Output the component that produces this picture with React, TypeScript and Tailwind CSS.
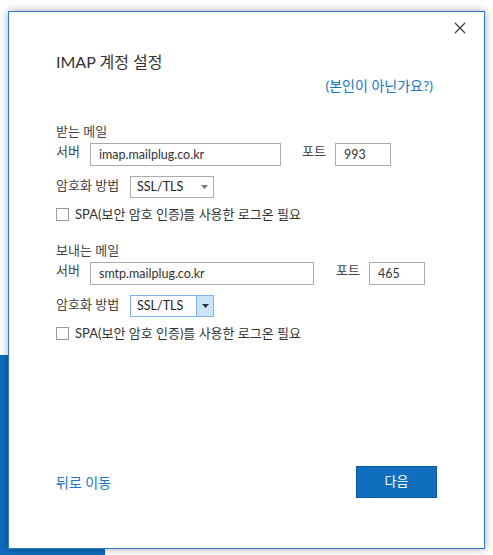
import React from "react";

const font = "font-['Lato','Noto_Sans_CJK_KR',sans-serif]";

function TextBox({ value, width }: { value: string; width: string }) {
  return (
    <div
      className={`${width} h-[23px] border border-[#ababab] bg-white pl-[8px] text-[12.5px] leading-[21px] text-[#333]`}
    >
      {value}
    </div>
  );
}

function Select({ active }: { active?: boolean }) {
  return (
    <div
      className={`flex w-[84px] h-[22px] border ${
        active ? "border-[#7eb4ea]" : "border-[#adadad]"
      } bg-white`}
    >
      <div className="flex-1 pl-[6px] text-[12.5px] leading-[20px] text-[#222]">SSL/TLS</div>
      <div
        className={`flex w-[17px] items-center justify-center ${
          active ? "bg-[#cce4f7] border-l border-[#7eb4ea]" : ""
        }`}
      >
        <svg width="7" height="4" viewBox="0 0 7 4">
          <path d="M0 0 L7 0 L3.5 4 Z" fill={active ? "#333" : "#777"} />
        </svg>
      </div>
    </div>
  );
}

function Checkbox({ label }: { label: string }) {
  return (
    <div className="flex items-center gap-[6px]">
      <div className="w-[13px] h-[13px] border border-[#999] bg-white" />
      <span className="text-[13px] leading-[18px] text-[#333]">{label}</span>
    </div>
  );
}

function Section({
  title,
  server,
  serverWidth,
  portGap,
  port,
  active,
}: {
  title: string;
  server: string;
  serverWidth: string;
  portGap: string;
  port: string;
  active?: boolean;
}) {
  return (
    <div className="flex flex-col">
      <div className="text-[13px] leading-[18px] text-[#444]">{title}</div>
      <div className="flex items-start mt-[3px]">
        <div className="w-[34px] text-[13px] leading-[17px] text-[#444]">서버</div>
        <TextBox value={server} width={serverWidth} />
        <div className={`${portGap} w-[33px] text-[13px] leading-[17px] text-[#444]`}>포트</div>
        <TextBox value={port} width="w-[56px]" />
      </div>
      <div className="flex items-start mt-[10px]">
        <div className="w-[74px] text-[13px] leading-[18px] text-[#444]">암호화 방법</div>
        <Select active={active} />
      </div>
      <div className="mt-[7px]">
        <Checkbox label="SPA(보안 암호 인증)를 사용한 로그온 필요" />
      </div>
    </div>
  );
}

export default function App() {
  return (
    <div className={`relative w-[493px] h-[555px] bg-white overflow-hidden ${font}`}>
      <div className="absolute left-0 top-[355px] w-[105px] h-[200px] bg-[#0f6cbd]" />
      <div className="relative ml-[8px] mt-[11px] w-[477px] h-[538px] border border-[#2b79c7] bg-white shadow-[0_0_8px_rgba(0,0,0,0.35)] flex flex-col">
        <div className="flex justify-end pt-[10px] pr-[18px]">
          <svg width="12" height="12" viewBox="0 0 12 12">
            <path d="M1 1 L11 11 M11 1 L1 11" stroke="#333" strokeWidth="1.1" />
          </svg>
        </div>
        <div className="pl-[47px] pr-[51px]">
          <div className="mt-[17px] text-[16px] leading-[22px] text-[#333]">IMAP 계정 설정</div>
          <div className="mt-[4px] text-right text-[14px] leading-[18px] text-[#1a75c8]">(본인이 아닌가요?)</div>
          <div className="mt-[27px]">
            <Section
              title="받는 메일"
              server="imap.mailplug.co.kr"
              serverWidth="w-[191px]"
              portGap="ml-[21px]"
              port="993"
            />
          </div>
          <div className="mt-[18px]">
            <Section
              title="보내는 메일"
              server="smtp.mailplug.co.kr"
              serverWidth="w-[224px]"
              portGap="ml-[22px]"
              port="465"
              active
            />
          </div>
        </div>
        <div className="flex-1" />
        <div className="flex items-center justify-between pl-[47px] pr-[47px] mb-[50px]">
          <span className="text-[14px] text-[#1a75c8]">뒤로 이동</span>
          <button className="w-[81px] h-[32px] bg-[#106ebe] border border-[#0b5aa3] text-[13px] text-white">
            다음
          </button>
        </div>
      </div>
    </div>
  );
}
